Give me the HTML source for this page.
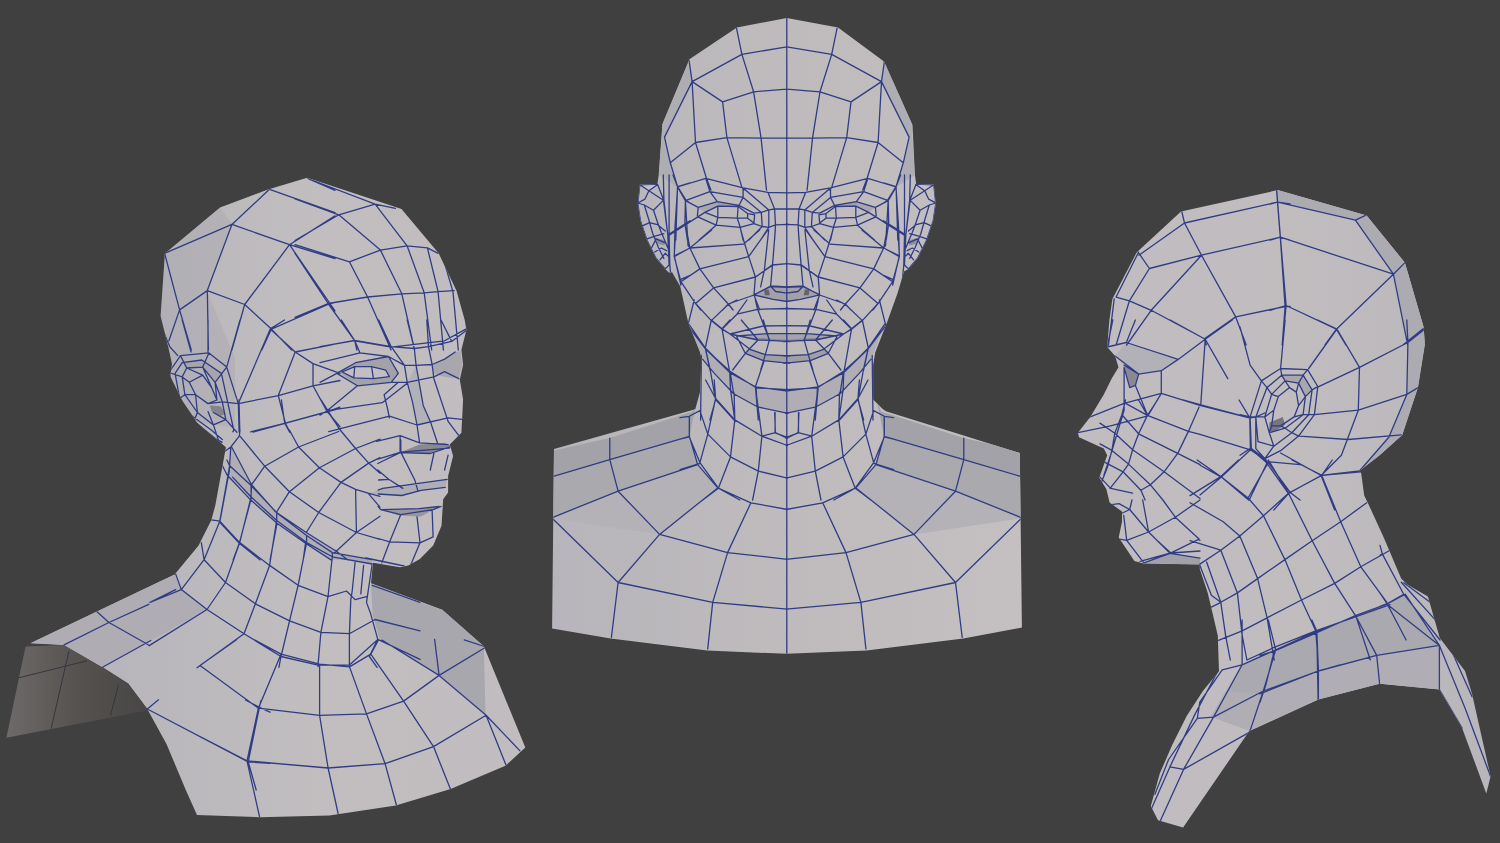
<!DOCTYPE html>
<html><head><meta charset="utf-8"><style>
html,body{margin:0;padding:0;width:1500px;height:843px;overflow:hidden;background:#404040;}
svg{display:block;}
</style></head><body>
<svg width="1500" height="843" viewBox="0 0 1500 843">
<defs>
<linearGradient id="gc" x1="0" y1="0" x2="1" y2="0">
<stop offset="0" stop-color="#b7b5bb"/><stop offset="0.5" stop-color="#bfbbbd"/><stop offset="1" stop-color="#c4bfc1"/>
</linearGradient>
<linearGradient id="gl" x1="0" y1="0" x2="1" y2="0">
<stop offset="0" stop-color="#b3b2b9"/><stop offset="0.6" stop-color="#c2bec0"/><stop offset="1" stop-color="#c0bcbf"/>
</linearGradient>
<linearGradient id="gr" x1="0" y1="0" x2="1" y2="0">
<stop offset="0" stop-color="#c0bcbf"/><stop offset="0.5" stop-color="#c1bdbf"/><stop offset="1" stop-color="#b9b6bb"/>
</linearGradient>
<linearGradient id="gdark" x1="0" y1="0" x2="1" y2="0">
<stop offset="0" stop-color="#6e6a6a"/><stop offset="0.5" stop-color="#55524f"/><stop offset="1" stop-color="#484646"/>
</linearGradient>
<clipPath id="clipC"><polygon points="786.7,18.0 838.0,27.5 884.0,61.5 912.5,125.0 914.9,175.0 916.2,184.1 933.8,184.8 935.8,203.7 933.2,220.7 926.6,240.2 917.5,258.5 908.4,268.9 904.0,271.4 897.7,292.7 887.0,322.6 875.2,352.5 873.1,365.3 873.1,399.5 882.7,409.1 885.9,411.2 1019.8,453.0 1021.9,627.6 963.4,638.5 866.6,650.6 786.8,653.8 707.3,650.6 610.6,638.5 552.1,628.4 554.0,449.0 688.2,411.3 695.3,409.3 700.3,391.1 701.3,358.9 700.3,352.8 688.2,322.6 680.2,286.3 672.1,272.2 669.1,272.8 665.2,268.9 656.1,258.5 647.0,240.2 640.4,220.7 637.8,203.7 639.8,184.8 657.4,184.1 658.7,175.0 662.4,124.3 689.4,59.3 736.9,27.5"/></clipPath>
<clipPath id="clipL"><polygon points="307.2,177.8 401.5,209.1 438.8,253.6 456.6,291.0 464.7,319.9 466.4,329.9 461.4,349.8 463.1,364.7 459.8,379.7 463.1,399.6 461.4,432.8 449.8,444.4 453.1,456.0 448.1,475.9 448.1,492.5 443.2,499.2 441.5,525.7 433.2,545.6 419.9,558.9 408.3,565.6 400.0,567.2 373.0,562.8 371.0,583.2 442.3,609.7 483.8,646.2 525.3,747.5 505.4,765.8 450.6,789.0 395.8,805.6 329.4,815.6 259.7,817.2 197.0,815.0 185.8,790.0 166.6,744.2 147.3,709.0 128.1,683.4 102.5,667.3 64.1,644.9 30.4,643.3 174.6,574.5 198.6,545.6 211.4,520.0 215.4,505.0 225.9,447.3 207.5,431.5 197.0,422.6 182.7,401.2 170.2,376.3 172.0,363.9 168.5,347.9 160.6,315.9 164.9,253.6 220.0,207.4 268.0,189.6"/><polygon points="25.6,646.5 64.1,644.9 102.5,667.3 128.1,683.4 147.3,709.0 147.3,710.6 6.4,737.8"/></clipPath>
<clipPath id="clipR"><polygon points="1277.8,190.1 1366.6,215.5 1404.9,262.7 1423.7,327.3 1424.8,345.0 1418.0,387.6 1402.3,435.0 1379.7,455.2 1359.4,471.0 1361.2,473.3 1364.2,495.6 1368.6,504.5 1383.5,537.1 1401.2,578.6 1407.2,584.6 1427.9,596.4 1439.8,637.9 1465.0,671.0 1472.0,693.8 1490.6,776.4 1486.3,793.5 1462.1,728.0 1439.4,689.5 1379.6,683.8 1318.4,699.5 1249.1,731.3 1183.1,827.5 1158.0,820.3 1150.8,805.9 1159.8,773.6 1172.3,744.8 1186.7,716.1 1202.9,690.9 1219.0,671.2 1217.8,635.5 1207.7,592.7 1199.8,569.0 1199.8,564.5 1143.5,563.4 1134.4,561.1 1118.7,537.5 1122.0,521.7 1122.0,511.6 1109.6,502.5 1106.3,489.0 1099.3,477.8 1107.2,455.2 1103.8,448.5 1079.0,437.2 1077.9,432.7 1090.3,416.9 1103.8,394.4 1111.7,378.6 1118.5,367.3 1115.1,356.1 1107.2,347.0 1109.4,320.0 1112.4,299.0 1136.6,252.6 1181.0,211.5"/></clipPath>
</defs>
<rect width="1500" height="843" fill="#404040"/>
<polygon fill="url(#gc)" points="786.7,18.0 838.0,27.5 884.0,61.5 912.5,125.0 914.9,175.0 916.2,184.1 933.8,184.8 935.8,203.7 933.2,220.7 926.6,240.2 917.5,258.5 908.4,268.9 904.0,271.4 897.7,292.7 887.0,322.6 875.2,352.5 873.1,365.3 873.1,399.5 882.7,409.1 885.9,411.2 1019.8,453.0 1021.9,627.6 963.4,638.5 866.6,650.6 786.8,653.8 707.3,650.6 610.6,638.5 552.1,628.4 554.0,449.0 688.2,411.3 695.3,409.3 700.3,391.1 701.3,358.9 700.3,352.8 688.2,322.6 680.2,286.3 672.1,272.2 669.1,272.8 665.2,268.9 656.1,258.5 647.0,240.2 640.4,220.7 637.8,203.7 639.8,184.8 657.4,184.1 658.7,175.0 662.4,124.3 689.4,59.3 736.9,27.5" />
<polygon fill="url(#gl)" points="307.2,177.8 401.5,209.1 438.8,253.6 456.6,291.0 464.7,319.9 466.4,329.9 461.4,349.8 463.1,364.7 459.8,379.7 463.1,399.6 461.4,432.8 449.8,444.4 453.1,456.0 448.1,475.9 448.1,492.5 443.2,499.2 441.5,525.7 433.2,545.6 419.9,558.9 408.3,565.6 400.0,567.2 373.0,562.8 371.0,583.2 442.3,609.7 483.8,646.2 525.3,747.5 505.4,765.8 450.6,789.0 395.8,805.6 329.4,815.6 259.7,817.2 197.0,815.0 185.8,790.0 166.6,744.2 147.3,709.0 128.1,683.4 102.5,667.3 64.1,644.9 30.4,643.3 174.6,574.5 198.6,545.6 211.4,520.0 215.4,505.0 225.9,447.3 207.5,431.5 197.0,422.6 182.7,401.2 170.2,376.3 172.0,363.9 168.5,347.9 160.6,315.9 164.9,253.6 220.0,207.4 268.0,189.6" />
<polygon fill="url(#gdark)" points="25.6,646.5 64.1,644.9 102.5,667.3 128.1,683.4 147.3,709.0 147.3,710.6 6.4,737.8" />
<polygon fill="url(#gr)" points="1277.8,190.1 1366.6,215.5 1404.9,262.7 1423.7,327.3 1424.8,345.0 1418.0,387.6 1402.3,435.0 1379.7,455.2 1359.4,471.0 1361.2,473.3 1364.2,495.6 1368.6,504.5 1383.5,537.1 1401.2,578.6 1407.2,584.6 1427.9,596.4 1439.8,637.9 1465.0,671.0 1472.0,693.8 1490.6,776.4 1486.3,793.5 1462.1,728.0 1439.4,689.5 1379.6,683.8 1318.4,699.5 1249.1,731.3 1183.1,827.5 1158.0,820.3 1150.8,805.9 1159.8,773.6 1172.3,744.8 1186.7,716.1 1202.9,690.9 1219.0,671.2 1217.8,635.5 1207.7,592.7 1199.8,569.0 1199.8,564.5 1143.5,563.4 1134.4,561.1 1118.7,537.5 1122.0,521.7 1122.0,511.6 1109.6,502.5 1106.3,489.0 1099.3,477.8 1107.2,455.2 1103.8,448.5 1079.0,437.2 1077.9,432.7 1090.3,416.9 1103.8,394.4 1111.7,378.6 1118.5,367.3 1115.1,356.1 1107.2,347.0 1109.4,320.0 1112.4,299.0 1136.6,252.6 1181.0,211.5" />
<g clip-path="url(#clipL)">
<polygon fill="#8a8890" points="209.8,405.4 220.5,406.3 225.8,413.4 220.5,416.0 211.6,411.6" />
<polygon fill="#aeacb3" points="182.2,362.7 201.8,360.0 221.4,373.4 215.1,382.3 202.7,367.1 186.7,368.0" />
<polygon fill="#a4a2a9" points="337.8,371.6 355.6,362.7 388.5,356.5 398.3,373.4 391.2,382.3 357.4,385.8" />
<polygon fill="#c2bfc4" points="342.2,372.0 354.7,366.6 371.6,366.6 385.8,370.2 389.4,376.6 373.4,378.7 353.8,377.8" />
<polygon fill="#a9a7ae" points="432.1,364.5 444.6,359.1 455.2,352.0 460.6,351.1 462.3,364.5 458.8,378.7 444.6,376.9 433.9,373.4" />
<polygon fill="#8a8890" points="400.1,452.6 419.6,444.6 444.6,442.8 451.7,446.3 430.3,453.5" />
<polygon fill="#b3b1b8" points="407.2,382.3 416.1,365.4 423.2,405.4 430.3,421.4 417.0,425.0 412.5,401.9" />
<polygon fill="#b0aeb5" points="368.6,493.4 382.7,488.4 421.0,483.4 447.2,479.3 445.2,487.4 421.0,490.4 401.8,495.5" />
<polygon fill="#98969d" points="380.7,509.6 419.0,508.6 439.1,506.5 421.0,516.6 398.8,515.6" />
<polygon fill="rgba(70,72,100,0.07)" points="164.9,253.6 220.0,207.4 232.0,224.0 207.0,291.0 235.0,358.0 235.0,428.0 193.8,421.4 170.0,376.0 160.6,315.9" />
<polygon fill="#a9a7ae" points="371.0,583.2 405.8,598.1 442.3,609.7 483.8,646.2 485.5,714.3 439.0,674.5 379.3,637.9 372.6,614.7" />
<polygon fill="#afadb3" points="30.4,643.3 92.9,608.1 174.6,574.4 182.6,588.9 206.6,609.7 145.7,643.3 102.5,667.3 64.1,644.9" />
<polygon fill="#a9a7ae" points="226.9,460.0 229.7,465.7 251.1,485.6 276.7,512.7 306.6,535.5 332.3,552.6 372.2,559.7 372.2,564.0 332.3,556.8 306.6,542.6 276.7,520.4 251.1,497.0 232.6,477.1" />
<polygon fill="#b0aeb4" points="231.6,447.0 251.6,484.7 275.5,511.7 306.3,532.5 337.1,551.8 347.9,559.9 331.0,559.9 305.5,543.3 277.0,523.3 250.8,500.1 226.9,474.7" />
<path fill="none" stroke="#303c84" stroke-width="1.3" stroke-linejoin="round" stroke-linecap="round" d="M269.2,189.6 L231.9,224.4 L164.6,253.3 M308.7,179.0 L335.0,190.3 M270.3,189.6 L335.0,212.7 M231.9,224.4 L289.5,244.7 L335.0,258.6 M289.5,244.7 L335.0,215.9 M231.9,224.4 L207.3,290.6 L208.4,350.0 M164.6,253.3 L179.6,309.9 L168.9,340.8 M179.6,309.9 L207.3,290.6 L244.7,304.5 L271.4,329.1 L291.7,350.0 M289.5,244.7 L244.7,304.5 L231.9,350.0 M289.5,244.7 L335.0,310.9 M271.4,329.1 L328.0,304.5 L335.0,302.4 M271.4,329.1 L261.8,350.0 M179.6,309.9 L191.3,350.0 M307.8,178.5 L375.1,204.2 L395.4,208.4 M295.0,198.8 L338.8,214.8 L375.1,204.2 M375.1,204.2 L407.1,245.8 L424.2,292.8 L431.7,350.0 M338.8,214.8 L380.4,250.1 L401.8,293.8 L414.6,350.0 M295.0,240.5 L338.8,214.8 M295.0,244.7 L349.4,261.8 L380.4,250.1 L407.1,245.8 L427.4,247.9 L438.1,253.3 M349.4,261.8 L367.6,297.0 L391.1,350.0 M295.0,253.3 L328.1,303.5 L354.8,340.8 L356.9,350.0 M295.0,317.3 L328.1,303.5 L367.6,297.0 L401.8,293.8 L424.2,292.8 L438.1,291.7 L454.1,290.6 M427.4,247.9 L438.1,291.7 L443.4,350.0 M442.3,255.4 L453.0,291.7 L458.3,350.0 M354.8,340.8 L391.1,347.2 L444.5,340.8 L465.8,329.1 M168.9,372.5 L180.5,355.6 L208.9,352.9 L226.7,367.1 L238.3,403.6 L239.1,432.1 M221.8,442.3 L218.7,440.9 L193.8,421.4 L176.9,400.0 L168.9,372.5 M175.1,373.4 L182.2,362.7 L201.8,360.0 L221.4,373.4 L233.8,430.3 L232.8,431.8 M222.3,439.6 L211.6,430.3 L192.0,416.0 L179.6,398.3 L175.1,373.4 M182.2,376.9 L186.7,368.0 L202.7,367.1 L215.1,382.3 L222.3,401.8 L225.8,419.6 L213.4,424.9 L197.4,412.5 L184.9,394.7 L182.2,376.9 M189.3,382.3 L202.7,375.1 L211.6,387.6 L216.9,400.0 L208.0,403.6 L195.6,394.7 L189.3,382.3 M168.9,372.5 L182.2,376.9 L189.3,382.3 M180.5,355.6 L186.7,368.0 L202.7,375.1 M208.9,352.9 L202.7,367.1 L211.6,387.6 M226.7,367.1 L215.1,382.3 L216.9,400.0 M238.3,403.6 L222.3,401.8 L208.0,403.6 M236.9,432.2 L225.8,419.6 L213.4,412.5 M218.7,440.9 L213.4,424.9 L208.0,411.6 M193.8,421.4 L197.4,412.5 L195.6,394.7 M176.9,400.0 L184.9,394.7 L195.6,394.7 M191.1,352.0 L182.2,320.0 M208.0,352.9 L208.0,320.0 M226.7,367.1 L240.0,320.0 M238.3,403.6 L270.3,328.9 L284.5,320.0 M238.3,403.6 L278.3,395.6 L313.0,385.8 L340.0,380.5 M270.3,328.9 L295.2,352.0 L313.0,363.6 L340.0,373.4 M295.2,352.0 L278.3,395.6 L285.4,423.2 L290.1,432.5 M313.0,363.6 L313.0,385.8 L327.2,411.6 L340.0,426.7 M250.7,431.8 L285.4,423.2 L327.2,411.6 L340.0,407.2 M295.2,352.0 L340.0,343.1 M160.0,323.6 L169.8,346.7 L177.8,355.6 M320.0,346.7 L354.7,340.5 L391.2,346.7 L414.3,348.5 L428.5,346.7 L451.7,341.4 L465.9,330.7 M341.4,320.0 L354.7,340.5 L360.0,352.9 M378.7,320.0 L391.2,346.7 L404.5,365.4 L407.2,382.3 M407.2,320.0 L414.3,348.5 L416.1,365.4 M426.8,320.0 L428.5,346.7 L432.1,364.5 M441.0,320.0 L451.7,341.4 M320.0,362.7 L360.0,352.9 L388.5,356.5 L404.5,365.4 L416.1,365.4 L432.1,364.5 L444.6,359.1 L455.2,352.0 M336.9,373.4 L355.6,362.7 L388.5,356.5 M336.9,373.4 L357.4,385.8 L391.2,382.3 L398.3,373.4 L388.5,356.5 M342.2,372.0 L354.7,366.6 L371.6,366.6 L385.8,370.2 L389.4,376.6 L373.4,378.7 L353.8,377.8 L342.2,372.0 M354.7,366.6 L353.8,377.8 M371.6,366.6 L373.4,378.7 M320.0,382.3 L336.9,373.4 M357.4,385.8 L327.1,410.7 L320.0,415.2 M391.2,382.3 L407.2,382.3 L433.9,376.9 L444.6,371.6 L458.8,378.7 M398.3,382.3 L384.1,394.7 L387.6,409.0 L389.4,417.9 M407.2,382.3 L412.5,401.9 L417.0,425.0 L419.6,442.8 M416.1,365.4 L423.2,405.4 L430.3,421.4 L437.4,442.8 M432.1,364.5 L433.9,378.7 L448.1,421.4 L458.8,435.7 M327.1,410.7 L382.3,402.7 L407.2,383.2 M328.7,431.7 L389.4,416.1 L417.0,425.0 L448.1,417.9 L464.1,419.6 M327.1,410.7 L341.8,432.0 M376.7,441.4 L400.1,435.7 L419.6,442.8 L448.1,444.6 M400.1,435.7 L400.1,452.6 M400.1,452.6 L377.8,463.5 M400.1,452.6 L430.3,453.5 L451.7,446.3 M433.9,453.5 L430.3,470.0 M448.1,455.2 L444.6,470.0 M377.8,470.0 L388.7,479.3 L402.8,488.4 M400.8,440.0 L400.8,452.1 L414.9,480.3 L418.0,491.4 M400.8,452.1 L449.2,448.1 M378.0,459.2 L400.8,452.1 M378.6,480.0 L388.7,479.3 M378.3,494.0 L401.8,495.5 L421.0,490.4 L445.2,487.4 M378.0,490.1 L382.7,488.4 L447.2,479.3 M378.1,506.4 L380.7,509.6 L400.8,514.6 L433.1,509.6 L441.2,506.5 M380.7,509.6 L419.0,508.6 L439.1,506.5 M378.3,538.5 L389.7,541.8 L420.0,542.8 L433.1,536.8 M365.9,558.0 L404.2,566.0 M389.7,541.8 L400.8,514.6 M389.7,541.8 L381.7,563.0 M420.0,542.8 L417.0,516.6 M420.0,542.8 L410.3,566.0 M433.1,536.8 L432.1,509.6 M219.1,440.7 L222.0,442.1 M253.2,432.0 L340.0,408.3 M239.8,432.0 L239.0,400.0 M281.4,400.0 L284.7,423.3 L289.5,432.0 M321.2,400.0 L340.0,429.9 M148.8,604.3 L108.9,622.5 L64.1,644.9 M150.8,640.5 L102.5,667.3 M158.5,699.8 L147.3,709.0 M92.9,608.1 L108.9,622.5 L145.7,643.3 L149.6,645.7 M245.4,700.0 L259.4,707.4 L270.0,712.2 M147.3,709.0 L248.2,761.8 L270.0,763.4 M260.8,700.8 L259.4,707.4 L248.2,761.8 L256.2,790.0 M150.7,584.7 L92.9,608.1 M226.9,460.0 L229.7,465.7 L251.1,485.6 L276.7,512.7 L306.6,535.5 L332.3,552.6 L372.2,559.7 M232.6,477.1 L251.1,497.0 L276.7,520.4 L306.6,542.6 L332.3,556.8 L372.2,564.0 M229.7,465.7 L219.8,521.2 L204.1,559.7 L181.3,589.6 L150.0,602.4 M251.1,485.6 L251.1,497.0 L239.7,542.6 L225.5,582.5 L207.0,609.5 L150.0,645.1 M276.7,512.7 L276.7,520.4 L269.6,565.4 L255.4,603.8 L244.0,633.7 L197.0,667.7 M306.6,535.5 L306.6,542.6 L298.1,585.3 L281.0,656.5 L278.9,667.4 M332.3,552.6 L332.3,556.8 L328.0,596.7 L320.9,632.3 L318.0,665.1 L318.0,666.5 M355.1,562.5 L352.2,591.0 L350.8,599.6 L349.4,633.7 L349.4,665.1 L349.6,666.5 M372.2,564.0 L366.5,602.4 L370.7,613.8 L377.8,639.4 L369.3,656.5 L377.1,667.4 M328.0,596.7 L346.5,591.0 L355.1,599.6 L366.5,596.7 M363.6,565.4 L360.8,593.9 M211.2,519.8 L219.8,521.2 L239.7,542.6 L269.6,565.4 L298.1,585.3 L328.0,596.7 M201.3,542.6 L204.1,559.7 L225.5,582.5 L255.4,603.8 L289.6,620.9 L320.9,632.3 L349.4,633.7 L375.0,619.5 M175.6,573.9 L181.3,589.6 L207.0,609.5 L244.0,633.7 L281.0,656.5 L318.0,665.1 L349.4,665.1 L377.8,639.4 M150.0,602.4 L175.6,589.6 M377.8,639.4 L420.0,659.4 M372.2,585.3 L420.0,602.4 M375.0,619.5 L420.0,630.9 M150.0,573.9 L175.6,573.9 M289.4,430.0 L298.6,447.0 L319.4,467.8 L341.0,482.4 L355.6,489.3 L368.0,493.2 L380.0,496.3 M240.0,436.2 L264.7,466.2 L289.4,491.7 L318.7,512.5 L356.4,532.5 L380.0,539.4 M231.6,447.0 L251.6,484.7 L275.5,511.7 L306.3,532.5 L337.1,551.8 L347.9,559.9 M220.0,460.8 L226.9,474.7 L250.8,500.1 L277.0,523.3 L305.5,543.3 L331.0,559.9 M220.0,522.5 L239.3,543.3 L260.1,559.9 M220.0,454.7 L230.8,447.0 L239.3,436.2 L240.0,430.0 M229.2,471.6 L230.8,447.0 M250.8,500.1 L251.6,484.7 L264.7,466.2 L298.6,447.0 L338.7,431.5 M276.3,512.5 L289.4,491.7 L319.4,467.8 L355.6,448.5 L380.0,439.2 M306.3,532.5 L318.7,512.5 L341.0,482.4 L368.7,463.1 L380.0,457.7 M334.1,553.3 L356.4,532.5 L355.6,489.3 M356.4,532.5 L380.0,516.3 M277.0,523.3 L270.1,559.9 M305.5,543.3 L303.2,559.9 M250.8,500.1 L239.3,543.3 L233.1,559.9 M220.0,520.9 L229.2,471.6 M355.6,489.3 L368.0,493.2 L380.0,507.1 M340.2,430.0 L355.6,448.5 L368.7,463.1 L380.0,473.2 M254.9,640.0 L281.1,654.1 L319.6,664.1 L349.5,666.9 L370.8,654.1 L378.6,639.7 M200.0,665.5 L258.4,708.2 L319.6,715.3 L366.5,713.9 L403.6,701.1 L439.1,675.4 L486.1,647.0 M200.0,736.7 L247.0,760.9 L328.1,768.0 L385.1,763.7 L433.5,746.6 L486.1,715.3 L520.0,750.9 M236.8,639.4 L200.0,665.5 M281.1,654.1 L258.4,708.2 L247.0,760.9 L259.8,817.8 M319.6,664.1 L319.6,715.3 L328.1,768.0 L338.1,813.5 M349.5,666.9 L366.5,713.9 L385.1,763.7 L396.4,805.0 M370.8,654.1 L403.6,701.1 L433.5,746.6 L450.5,789.3 M381.9,640.0 L439.1,675.4 L486.1,715.3 L506.0,765.1 M464.2,639.9 L486.1,647.0 M434.6,639.4 L439.1,675.4"/>
<path fill="none" stroke="#363640" stroke-width="1.0" stroke-linejoin="round" stroke-linecap="round" d="M16.0,678.5 L86.5,660.9 M68.9,651.3 L51.2,728.2 M118.5,684.9 L110.5,715.4"/>
</g>
<g clip-path="url(#clipC)">
<polygon fill="#a9a7ad" points="698.2,207.4 717.3,201.6 717.8,206.1 704.9,212.4" />
<polygon fill="#a9a7ad" points="875.4,207.4 856.3,201.6 855.8,206.1 868.7,212.4" />
<polygon fill="#9e9ca3" points="717.3,201.6 738.9,205.3 738.1,206.5 717.8,206.1" />
<polygon fill="#9e9ca3" points="856.3,201.6 834.7,205.3 835.5,206.5 855.8,206.1" />
<polygon fill="#a6a4aa" points="736.7,336.0 766.7,333.7 790.0,333.7 790.0,341.7 769.3,340.3 758.0,340.0" />
<polygon fill="#a6a4aa" points="836.9,336.0 806.9,333.7 783.6,333.7 783.6,341.7 804.3,340.3 815.6,340.0" />
<polygon fill="#8e8c92" points="746.7,338.0 758.0,340.0 769.3,340.3 790.0,341.7 790.0,340.0 763.3,338.0" />
<polygon fill="#8e8c92" points="826.9,338.0 815.6,340.0 804.3,340.3 783.6,341.7 783.6,340.0 810.3,338.0" />
<polygon fill="#a19fa5" points="750.0,349.3 765.3,354.7 790.0,356.0 790.0,363.3 763.3,360.7 745.3,353.3" />
<polygon fill="#a19fa5" points="823.6,349.3 808.3,354.7 783.6,356.0 783.6,363.3 810.3,360.7 828.3,353.3" />
<polygon fill="#a3a2a8" points="550.0,451.4 609.8,438.1 692.8,411.5 701.1,380.0 689.4,436.4 609.8,459.7 550.0,476.3" />
<polygon fill="#a3a2a8" points="1023.6,451.4 963.8,438.1 880.8,411.5 872.5,380.0 884.2,436.4 963.8,459.7 1023.6,476.3" />
<polygon fill="#aaa9ae" points="550.0,476.3 609.8,459.7 689.4,436.4 697.7,464.7 618.1,491.2 550.0,517.8" />
<polygon fill="#aaa9ae" points="1023.6,476.3 963.8,459.7 884.2,436.4 875.9,464.7 955.5,491.2 1023.6,517.8" />
<polygon fill="#b4b2b7" points="550.0,517.8 618.1,491.2 697.7,464.7 717.7,487.9 659.6,534.4" />
<polygon fill="#b4b2b7" points="1023.6,517.8 955.5,491.2 875.9,464.7 855.9,487.9 914.0,534.4" />
<polygon fill="#b0aeb4" points="688.5,323.7 707.5,351.0 730.0,371.2 756.1,387.8 788.1,389.7 788.1,413.4 757.3,406.8 733.6,393.7 714.6,373.6 702.7,359.3" />
<polygon fill="#b0aeb4" points="885.1,323.7 866.1,351.0 843.6,371.2 817.5,387.8 785.5,389.7 785.5,413.4 816.3,406.8 840.0,393.7 859.0,373.6 870.9,359.3" />
<polygon fill="#8e8c94" points="654.8,237.6 664.6,240.2 664.6,245.4 658.0,244.1" />
<polygon fill="#8e8c94" points="918.8,237.6 909.0,240.2 909.0,245.4 915.6,244.1" />
<polygon fill="#c4c2c8" points="639.8,184.8 657.4,184.8 648.9,190.7" />
<polygon fill="#c4c2c8" points="933.8,184.8 916.2,184.8 924.7,190.7" />
<polygon fill="#a3a1a7" points="753.7,294.8 770.7,286.5 787.1,287.3 787.1,301.5 773.2,299.4" />
<polygon fill="#a3a1a7" points="819.9,294.8 802.9,286.5 786.5,287.3 786.5,301.5 800.4,299.4" />
<polygon fill="#66646a" points="764.1,289.8 768.7,289.4 769.9,295.2 764.9,295.2" />
<polygon fill="#66646a" points="809.5,289.8 804.9,289.4 803.7,295.2 808.7,295.2" />
<polygon fill="#aeadb4" points="689.1,60.6 662.2,122.2 658.7,175.0 677.8,187.4 670.3,162.8 664.5,137.1 692.1,81.6" />
<polygon fill="#aeadb4" points="884.5,60.6 911.4,122.2 914.9,175.0 895.8,187.4 903.3,162.8 909.1,137.1 881.5,81.6" />
<path fill="none" stroke="#303c84" stroke-width="1.3" stroke-linejoin="round" stroke-linecap="round" d="M786.8,18.1 L786.8,190.1 M736.5,28.2 L741.9,54.4 L753.6,91.8 L761.1,138.2 L766.5,190.1 M837.1,28.2 L831.7,54.4 L820.0,91.8 L812.5,138.2 L807.1,190.1 M689.1,60.6 L692.1,81.6 L695.5,142.5 L706.6,178.8 L710.9,190.1 M884.5,60.6 L881.5,81.6 L878.1,142.5 L867.0,178.8 L862.7,190.1 M692.1,81.6 L722.6,101.9 L726.9,137.6 L741.9,187.4 L744.0,190.1 M881.5,81.6 L851.0,101.9 L846.7,137.6 L831.7,187.4 L829.6,190.1 M786.8,46.8 L741.9,54.4 L692.1,81.6 L664.5,137.1 M786.8,46.8 L831.7,54.4 L881.5,81.6 L909.1,137.1 M786.8,89.1 L753.6,91.8 L722.6,101.9 M786.8,89.1 L820.0,91.8 L851.0,101.9 M786.8,138.2 L761.1,138.2 L726.9,137.6 L695.5,142.5 L670.3,162.8 M786.8,138.2 L812.5,138.2 L846.7,137.6 L878.1,142.5 L903.3,162.8 M664.5,137.1 L670.3,162.8 L677.8,187.4 M909.1,137.1 L903.3,162.8 L895.8,187.4 M677.5,187.0 L705.7,178.3 L743.1,187.9 L768.0,192.4 L787.5,192.8 M896.1,187.0 L867.9,178.3 L830.5,187.9 L805.6,192.4 L786.1,192.8 M705.7,178.3 L709.9,191.6 L717.3,201.6 M867.9,178.3 L863.7,191.6 L856.3,201.6 M743.1,187.9 L743.1,197.4 L738.9,205.7 M830.5,187.9 L830.5,197.4 L834.7,205.7 M768.0,192.4 L774.6,209.0 L775.5,224.8 L774.6,240.0 M805.6,192.4 L799.0,209.0 L798.1,224.8 L799.0,240.0 M677.5,187.0 L685.4,200.7 L709.9,191.6 L743.1,197.4 L761.3,212.4 M896.1,187.0 L888.2,200.7 L863.7,191.6 L830.5,197.4 L812.3,212.4 M743.1,187.9 L768.8,209.9 L774.6,209.0 L787.5,209.0 M830.5,187.9 L804.8,209.9 L799.0,209.0 L786.1,209.0 M685.4,200.7 L698.2,207.4 L717.3,201.6 L738.9,205.3 L753.9,213.2 L761.3,212.4 L768.8,209.9 M888.2,200.7 L875.4,207.4 L856.3,201.6 L834.7,205.3 L819.7,213.2 L812.3,212.4 L804.8,209.9 M698.2,207.4 L697.4,215.7 M875.4,207.4 L876.2,215.7 M704.9,212.4 L717.8,206.1 L738.1,206.5 L747.6,213.6 L754.7,214.8 M868.7,212.4 L855.8,206.1 L835.5,206.5 L826.0,213.6 L818.9,214.8 M704.9,212.4 L717.8,217.3 L737.3,218.2 L747.6,218.2 L753.9,223.1 M868.7,212.4 L855.8,217.3 L836.3,218.2 L826.0,218.2 L819.7,223.1 M697.8,216.9 L704.9,212.4 M875.8,216.9 L868.7,212.4 M697.8,216.9 L716.1,225.2 L740.2,227.3 L753.9,223.6 L762.2,226.5 L768.8,227.3 L775.5,224.8 L787.5,224.4 M875.8,216.9 L857.5,225.2 L833.4,227.3 L819.7,223.6 L811.4,226.5 L804.8,227.3 L798.1,224.8 L786.1,224.4 M717.8,206.1 L717.8,217.3 L716.1,225.2 M855.8,206.1 L855.8,217.3 L857.5,225.2 M738.1,206.5 L737.3,218.2 L740.2,227.3 M835.5,206.5 L836.3,218.2 L833.4,227.3 M747.6,213.6 L747.6,218.2 M826.0,213.6 L826.0,218.2 M754.7,214.8 L753.9,223.1 M818.9,214.8 L819.7,223.1 M761.3,212.4 L762.2,226.5 M812.3,212.4 L811.4,226.5 M768.8,209.9 L768.8,227.3 M804.8,209.9 L804.8,227.3 M670.0,234.8 L697.8,216.9 M903.6,234.8 L875.8,216.9 M685.4,200.7 L684.9,223.1 L687.4,240.0 M888.2,200.7 L888.7,223.1 L886.2,240.0 M677.5,187.0 L675.8,240.0 M896.1,187.0 L897.8,240.0 M716.1,225.2 L699.1,240.0 M857.5,225.2 L874.5,240.0 M740.2,227.3 L743.1,240.0 M833.4,227.3 L830.5,240.0 M762.2,226.5 L748.9,240.0 M811.4,226.5 L824.7,240.0 M768.8,227.3 L760.5,240.0 M804.8,227.3 L813.1,240.0 M686.6,230.0 L689.9,248.0 L699.9,268.9 L713.6,287.9 L728.3,304.0 L733.1,310.0 M887.0,230.0 L883.7,248.0 L873.7,268.9 L860.0,287.9 L845.3,304.0 L840.5,310.0 M711.7,230.0 L689.9,248.0 L674.2,256.6 M861.9,230.0 L883.7,248.0 L899.4,256.6 M689.9,248.0 L743.5,244.2 M883.7,248.0 L830.1,244.2 M740.7,230.0 L744.5,243.3 L748.7,256.6 L755.4,277.0 L754.0,295.0 L759.7,310.0 M832.9,230.0 L829.1,243.3 L824.9,256.6 L818.2,277.0 L819.6,295.0 L813.9,310.0 M759.7,230.0 L744.5,243.3 M813.9,230.0 L829.1,243.3 M767.7,230.0 L748.7,256.6 M805.9,230.0 L824.9,256.6 M768.7,230.0 L764.4,269.9 L760.6,286.9 M804.9,230.0 L809.2,269.9 L813.0,286.9 M775.3,230.0 L772.5,265.1 L770.6,286.0 M798.3,230.0 L801.1,265.1 L803.0,286.0 M675.7,230.0 L674.2,256.6 L680.9,281.7 L695.6,303.6 L700.8,310.0 M897.9,230.0 L899.4,256.6 L892.7,281.7 L878.0,303.6 L872.8,310.0 M699.9,268.9 L748.7,256.6 M873.7,268.9 L824.9,256.6 M680.9,281.7 L699.9,268.9 M892.7,281.7 L873.7,268.9 M713.6,287.9 L755.4,277.0 M860.0,287.9 L818.2,277.0 M695.6,303.6 L713.6,287.9 M878.0,303.6 L860.0,287.9 M728.3,304.0 L754.0,295.0 M845.3,304.0 L819.6,295.0 M754.0,295.0 L770.6,286.0 L787.7,286.9 M819.6,295.0 L803.0,286.0 L785.9,286.9 M755.4,277.0 L772.5,265.1 L787.7,263.7 M818.2,277.0 L801.1,265.1 L785.9,263.7 M722.6,310.0 L728.3,304.0 M851.0,310.0 L845.3,304.0 M711.3,320.0 L722.0,328.7 L730.0,334.0 L758.0,340.0 L769.3,340.3 L790.0,341.7 M862.3,320.0 L851.6,328.7 L843.6,334.0 L815.6,340.0 L804.3,340.3 L783.6,341.7 M730.0,334.0 L763.3,326.0 L790.0,325.7 M843.6,334.0 L810.3,326.0 L783.6,325.7 M736.7,336.0 L766.7,333.7 L790.0,333.7 M836.9,336.0 L806.9,333.7 L783.6,333.7 M741.3,320.0 L758.0,340.0 L745.3,353.3 L732.7,370.0 M832.3,320.0 L815.6,340.0 L828.3,353.3 L840.9,370.0 M763.3,320.0 L769.3,340.3 L765.3,354.7 L760.7,370.0 M810.3,320.0 L804.3,340.3 L808.3,354.7 L812.9,370.0 M730.0,320.0 L722.0,328.7 L729.3,370.0 M843.6,320.0 L851.6,328.7 L844.3,370.0 M711.3,320.0 L705.3,348.0 L710.0,370.0 M862.3,320.0 L868.3,348.0 L863.6,370.0 M690.0,328.7 L705.3,348.0 L727.3,370.0 M883.6,328.7 L868.3,348.0 L846.3,370.0 M730.0,334.0 L750.0,349.3 L765.3,354.7 L790.0,356.0 M843.6,334.0 L823.6,349.3 L808.3,354.7 L783.6,356.0 M736.7,336.7 L745.3,353.3 L763.3,360.7 L790.0,363.3 M836.9,336.7 L828.3,353.3 L810.3,360.7 L783.6,363.3 M687.8,325.6 L705.6,349.1 L729.8,372.6 L755.4,386.8 L787.5,391.1 M885.8,325.6 L868.0,349.1 L843.8,372.6 L818.2,386.8 L786.1,391.1 M758.3,420.0 L755.4,386.8 M815.3,420.0 L818.2,386.8 M764.0,361.2 L755.4,386.8 M809.6,361.2 L818.2,386.8 M729.8,372.6 L730.5,389.7 L734.8,420.0 M843.8,372.6 L843.1,389.7 L838.8,420.0 M705.6,349.1 L709.9,368.3 L715.6,399.6 L709.9,420.0 M868.0,349.1 L863.7,368.3 L858.0,399.6 L863.7,420.0 M701.4,355.5 L700.6,420.0 M872.2,355.5 L873.0,420.0 M715.6,399.6 L734.1,420.0 M858.0,399.6 L839.5,420.0 M786.8,18.0 L786.8,653.8 M736.9,314.2 L757.6,309.3 L787.5,308.5 M836.7,314.2 L816.0,309.3 L786.1,308.5 M711.3,320.6 L728.4,304.3 L736.9,300.0 M862.3,320.6 L845.2,304.3 L836.7,300.0 M694.9,302.8 L711.3,320.6 L722.0,329.2 L730.5,334.2 M878.7,302.8 L862.3,320.6 L851.6,329.2 L843.1,334.2 M722.0,329.2 L736.9,314.2 L746.9,300.0 M851.6,329.2 L836.7,314.2 L826.7,300.0 M755.4,300.0 L757.6,309.3 L769.7,340.6 M818.2,300.0 L816.0,309.3 L803.9,340.6 M694.2,300.0 L687.8,325.6 M879.4,300.0 L885.8,325.6 M680.0,417.7 L689.3,416.3 L699.9,410.6 L707.8,434.1 L730.5,456.9 L758.3,471.1 L787.5,478.2 M893.6,417.7 L884.3,416.3 L873.7,410.6 L865.8,434.1 L843.1,456.9 L815.3,471.1 L786.1,478.2 M689.3,416.3 L689.3,436.9 L699.9,462.6 L718.4,488.2 L702.8,500.0 M884.3,416.3 L884.3,436.9 L873.7,462.6 L855.2,488.2 L870.8,500.0 M680.0,439.1 L689.3,436.9 M893.6,439.1 L884.3,436.9 M680.0,469.7 L699.9,463.3 M893.6,469.7 L873.7,463.3 M705.6,380.0 L715.6,398.5 L734.8,419.9 L761.9,436.2 L775.4,432.7 L787.5,438.4 M868.0,380.0 L858.0,398.5 L838.8,419.9 L811.7,436.2 L798.2,432.7 L786.1,438.4 M715.6,398.5 L707.8,434.1 L699.9,462.6 M858.0,398.5 L865.8,434.1 L873.7,462.6 M734.8,419.9 L730.5,456.9 L718.4,488.2 M838.8,419.9 L843.1,456.9 L855.2,488.2 M761.9,436.2 L758.3,471.1 L752.6,500.0 M811.7,436.2 L815.3,471.1 L821.0,500.0 M714.2,380.0 L715.6,398.5 M859.4,380.0 L858.0,398.5 M734.1,392.8 L734.8,419.9 M839.5,392.8 L838.8,419.9 M755.4,387.1 L761.9,436.2 M818.2,387.1 L811.7,436.2 M718.4,488.2 L739.8,500.0 M855.2,488.2 L833.8,500.0 M774.7,412.7 L775.4,432.7 M798.9,412.7 L798.2,432.7 M761.9,436.2 L787.5,445.5 M811.7,436.2 L786.1,445.5 M553.3,476.3 L609.8,459.7 L689.4,436.4 M1020.3,476.3 L963.8,459.7 L884.2,436.4 M551.7,517.8 L618.1,491.2 L697.7,464.7 M1021.9,517.8 L955.5,491.2 L875.9,464.7 M609.8,438.1 L609.8,459.7 L618.1,491.2 L659.6,534.4 L618.1,582.5 L611.4,637.3 M963.8,438.1 L963.8,459.7 L955.5,491.2 L914.0,534.4 L955.5,582.5 L962.2,637.3 M551.7,517.8 L618.1,582.5 L712.7,602.4 L787.4,609.1 M1021.9,517.8 L955.5,582.5 L860.9,602.4 L786.2,609.1 M689.4,416.5 L689.4,436.4 L697.7,464.7 L717.7,487.9 L750.9,502.8 L787.4,509.5 M884.2,416.5 L884.2,436.4 L875.9,464.7 L855.9,487.9 L822.7,502.8 L786.2,509.5 M659.6,534.4 L727.6,552.6 L787.4,559.3 M914.0,534.4 L846.0,552.6 L786.2,559.3 M717.7,487.9 L659.6,534.4 M855.9,487.9 L914.0,534.4 M750.9,502.8 L727.6,552.6 L712.7,602.4 L707.7,648.9 M822.7,502.8 L846.0,552.6 L860.9,602.4 L865.9,648.9 M688.5,323.7 L707.5,351.0 L730.0,371.2 L756.1,387.8 L788.1,389.7 M885.1,323.7 L866.1,351.0 L843.6,371.2 L817.5,387.8 L785.5,389.7 M702.7,359.3 L714.6,373.6 L733.6,393.7 L757.3,406.8 L788.1,413.4 M870.9,359.3 L859.0,373.6 L840.0,393.7 L816.3,406.8 L785.5,413.4 M730.0,371.2 L733.6,393.7 M843.6,371.2 L840.0,393.7 M756.1,387.8 L757.3,406.8 M817.5,387.8 L816.3,406.8 M775.1,412.7 L775.1,432.9 L788.1,437.6 M798.5,412.7 L798.5,432.9 L785.5,437.6 M639.8,184.8 L657.4,184.1 L663.3,199.1 L667.8,235.0 L669.1,265.0 L665.2,268.9 L656.1,258.5 L647.0,240.2 L640.4,220.7 L637.8,203.7 L639.8,184.8 M933.8,184.8 L916.2,184.1 L910.3,199.1 L905.8,235.0 L904.5,265.0 L908.4,268.9 L917.5,258.5 L926.6,240.2 L933.2,220.7 L935.8,203.7 L933.8,184.8 M639.8,184.8 L648.9,190.7 L657.4,184.8 M933.8,184.8 L924.7,190.7 L916.2,184.8 M648.9,190.7 L645.0,199.1 L637.8,203.0 M924.7,190.7 L928.6,199.1 L935.8,203.0 M648.9,190.7 L662.6,199.8 M924.7,190.7 L911.0,199.8 M637.8,203.0 L644.3,205.0 L653.5,210.2 L662.6,201.1 M935.8,203.0 L929.3,205.0 L920.1,210.2 L911.0,201.1 M644.3,205.0 L648.3,218.0 L652.8,233.7 L658.7,248.0 L663.9,258.5 M929.3,205.0 L925.3,218.0 L920.8,233.7 L914.9,248.0 L909.7,258.5 M653.5,210.2 L657.4,222.0 L661.3,232.4 L665.2,241.5 L667.8,248.0 M920.1,210.2 L916.2,222.0 L912.3,232.4 L908.4,241.5 L905.8,248.0 M642.4,225.9 L649.6,222.6 L657.4,224.6 L665.2,231.1 M931.2,225.9 L924.0,222.6 L916.2,224.6 L908.4,231.1 M647.0,238.9 L654.1,236.3 L663.9,233.7 M926.6,238.9 L919.5,236.3 L909.7,233.7 M651.5,248.0 L656.1,238.9 L665.2,242.8 M922.1,248.0 L917.5,238.9 L908.4,242.8 M654.8,252.0 L661.3,248.0 L666.5,250.7 M918.8,252.0 L912.3,248.0 L907.1,250.7 M660.0,259.8 L665.2,253.3 L667.8,255.9 M913.6,259.8 L908.4,253.3 L905.8,255.9 M663.3,175.0 L663.9,199.8 L667.8,235.0 M910.3,175.0 L909.7,199.8 L905.8,235.0 M669.1,175.0 L669.1,235.0 L669.8,265.0 L671.7,285.0 M904.5,175.0 L904.5,235.0 L903.8,265.0 L901.9,285.0 M673.0,175.0 L677.6,186.7 L686.1,200.4 L690.0,203.0 M900.6,175.0 L896.0,186.7 L887.5,200.4 L883.6,203.0 M677.6,186.7 L690.0,182.8 M896.0,186.7 L883.6,182.8 M677.6,186.7 L675.0,227.2 L674.3,255.9 L680.9,285.0 M896.0,186.7 L898.6,227.2 L899.3,255.9 L892.7,285.0 M685.4,200.4 L688.0,245.4 L690.0,248.0 M888.2,200.4 L885.6,245.4 L883.6,248.0 M667.8,235.0 L679.6,227.2 L690.0,220.7 M905.8,235.0 L894.0,227.2 L883.6,220.7 M674.3,255.9 L690.0,248.0 M899.3,255.9 L883.6,248.0 M680.9,279.3 L690.0,275.4 M892.7,279.3 L883.6,275.4 M753.7,294.8 L770.7,286.5 L787.1,287.3 M819.9,294.8 L802.9,286.5 L786.5,287.3 M753.7,294.8 L773.2,299.4 L787.1,301.5 M819.9,294.8 L800.4,299.4 L786.5,301.5 M770.7,286.5 L775.7,291.5 L787.1,293.2 M802.9,286.5 L797.9,291.5 L786.5,293.2 M755.0,277.4 L772.4,264.9 L787.1,263.7 M818.6,277.4 L801.2,264.9 L786.5,263.7"/>
</g>
<g clip-path="url(#clipR)">
<polygon fill="#acabb2" points="1276.6,189.7 1367.7,214.4 1405.7,260.9 1423.7,327.3 1430.0,345.0 1407.6,345.0 1393.4,274.2 1355.4,220.1 1277.6,202.1" />
<polygon fill="#77757e" points="1269.3,422.6 1282.8,416.9 1285.1,424.8 1276.1,430.4 1269.3,431.6" />
<polygon fill="#a9a7ae" points="1281.7,375.2 1303.1,375.2 1312.1,389.9 1305.4,396.6 1298.6,383.1 1285.1,380.9" />
<polygon fill="#b3b1b8" points="1115.1,356.1 1126.3,342.5 1178.2,359.4 1161.3,370.7 1138.7,374.1 1124.1,365.1" />
<polygon fill="#8a8890" points="1124.1,365.1 1138.7,374.1 1135.4,385.4 1129.7,387.6" />
<polygon fill="#a3a1a8" points="1143.9,562.9 1170.0,553.4 1200.0,558.1 1200.0,564.7" />
<polygon fill="#aba9b0" points="1242.1,664.5 1260.0,655.4 1274.2,651.1 1316.9,632.6 1355.4,615.5 1386.7,604.1 1405.2,594.2 1439.4,645.4 1439.4,689.5 1379.6,683.8 1318.4,699.5 1260.0,725.1 1249.2,730.8 1211.0,716.6" />
<polygon fill="#b0aeb4" points="1225.8,691.0 1260.0,693.8 1318.4,671.0 1376.7,655.4 1439.4,645.4 1439.4,689.5 1379.6,683.8 1318.4,699.5 1260.0,725.1 1249.2,730.8 1211.0,716.6" />
<polygon fill="#acabb2" points="1404.9,262.7 1423.7,327.3 1424.8,345.0 1418.0,387.6 1402.3,435.0 1379.7,455.2 1359.4,471.0 1388.7,437.2 1406.8,394.4 1407.9,342.5 1406.8,320.0 1392.0,262.0" />
<path fill="none" stroke="#303c84" stroke-width="1.3" stroke-linejoin="round" stroke-linecap="round" d="M1276.5,189.7 L1277.5,202.1 L1280.3,237.2 L1285.1,306.5 L1282.2,345.0 M1181.6,210.6 L1184.5,223.0 L1201.5,255.2 L1235.7,316.9 L1246.2,345.0 M1137.0,250.5 L1149.4,268.5 L1201.5,255.2 L1280.3,237.2 L1290.0,240.0 M1138.9,255.2 L1184.5,223.0 L1277.5,202.1 L1290.0,204.0 M1116.1,297.0 L1129.4,300.8 L1151.2,310.3 L1204.4,338.7 L1206.3,345.0 M1149.4,268.5 L1129.4,300.8 L1116.1,345.0 M1201.5,255.2 L1151.2,310.3 L1126.6,345.0 M1235.7,316.9 L1285.1,306.5 L1290.0,306.5 M1204.4,338.7 L1235.7,316.9 M1138.0,253.3 L1116.1,297.0 M1114.2,298.9 L1108.5,345.0 M1276.6,189.7 L1277.6,202.1 L1280.4,237.2 L1286.1,305.5 L1282.3,345.0 M1270.0,204.0 L1277.6,202.1 L1355.4,220.1 L1367.7,214.4 M1270.0,240.0 L1280.4,237.2 L1393.4,274.2 L1405.7,261.9 M1355.4,220.1 L1393.4,274.2 L1407.6,344.4 M1393.4,274.2 L1336.4,329.2 L1325.0,345.0 M1270.0,310.3 L1286.1,305.5 L1336.4,329.2 L1345.9,345.0 M1423.7,328.3 L1402.9,345.0 M1285.1,320.0 L1280.6,368.5 M1317.8,320.0 L1336.9,329.0 L1359.5,367.3 L1358.3,410.2 L1341.4,455.2 L1321.1,475.5 M1336.9,329.0 L1308.7,368.5 M1240.0,326.8 L1250.1,365.1 L1261.4,380.9 M1406.8,320.0 L1407.9,342.5 L1406.8,394.4 L1388.8,437.2 L1359.5,471.0 M1424.8,329.0 L1407.9,342.5 L1359.5,367.3 L1316.6,387.6 M1418.1,387.6 L1406.8,394.4 L1358.3,410.2 L1314.4,414.7 M1401.2,434.9 L1348.2,439.5 L1299.7,436.1 M1359.5,471.0 L1321.1,475.5 L1280.6,453.0 M1321.1,475.5 L1334.7,510.0 M1321.1,475.5 L1288.5,493.5 L1273.8,510.0 M1265.9,462.0 L1288.5,493.5 M1250.1,448.5 L1265.9,462.0 M1250.1,448.5 L1240.0,455.2 M1250.1,416.9 L1240.0,414.7 M1261.4,380.9 L1280.6,368.5 L1307.6,369.6 L1317.8,386.5 L1314.4,414.7 L1298.6,436.1 L1280.6,450.7 L1264.8,458.6 L1251.3,448.5 L1250.1,416.9 L1261.4,380.9 M1267.0,387.6 L1281.7,375.2 L1303.1,375.2 L1312.1,389.9 L1308.7,414.7 L1291.8,432.7 L1273.8,446.2 L1258.0,441.7 L1255.8,416.9 L1267.0,387.6 M1271.6,394.4 L1285.1,380.9 L1298.6,383.1 L1305.4,396.6 L1303.1,414.7 L1285.1,428.2 L1269.3,432.7 L1264.8,416.9 L1271.6,394.4 M1278.3,396.6 L1289.6,387.6 L1296.3,392.1 L1298.6,405.6 L1294.1,416.9 L1280.6,425.9 L1271.6,425.9 L1273.8,410.2 L1278.3,396.6 M1280.6,368.5 L1281.7,375.2 L1285.1,380.9 L1289.6,387.6 M1307.6,369.6 L1303.1,375.2 L1298.6,383.1 L1296.3,392.1 M1317.8,386.5 L1312.1,389.9 L1305.4,396.6 L1298.6,405.6 M1314.4,414.7 L1308.7,414.7 L1303.1,414.7 L1294.1,416.9 M1298.6,436.1 L1291.8,432.7 L1285.1,428.2 L1280.6,425.9 M1264.8,458.6 L1273.8,446.2 L1269.3,432.7 L1271.6,425.9 M1250.1,416.9 L1255.8,416.9 L1264.8,416.9 L1273.8,410.2 M1261.4,380.9 L1267.0,387.6 L1271.6,394.4 L1278.3,396.6 M1107.2,347.0 L1126.3,342.5 L1178.2,359.4 L1205.2,339.2 L1232.3,320.0 M1112.8,320.0 L1107.2,347.0 M1135.4,320.0 L1126.3,342.5 M1170.3,320.0 L1205.2,339.2 L1227.8,378.6 M1205.2,339.2 L1200.7,405.6 M1178.2,359.4 L1161.3,370.7 L1161.3,393.3 L1147.8,415.8 M1115.1,356.1 L1138.7,374.1 L1161.3,370.7 M1124.1,365.1 L1138.7,374.1 L1135.4,385.4 L1129.7,387.6 L1124.1,367.3 M1161.3,393.3 L1200.7,405.6 L1250.3,418.0 M1090.3,416.9 L1124.1,403.4 L1161.3,393.3 M1077.9,432.7 L1110.6,425.9 L1147.8,415.8 M1124.1,367.3 L1124.1,410.2 L1117.3,432.7 L1110.6,455.2 L1103.8,475.5 M1135.4,385.4 L1147.8,415.8 M1125.5,400.0 L1121.9,414.8 L1114.8,433.2 L1111.9,450.4 L1107.7,466.4 L1101.2,483.0 M1157.5,400.0 L1147.4,415.4 L1138.6,433.8 L1132.6,449.8 L1128.5,464.1 L1123.1,471.8 L1110.1,488.4 M1199.1,407.1 L1188.4,431.4 L1177.7,453.4 L1164.1,471.8 L1150.4,484.8 L1140.9,490.2 M1126.1,403.6 L1147.4,415.4 L1188.4,431.4 L1200.0,434.4 M1121.9,414.8 L1138.6,433.8 L1177.7,453.4 L1200.0,464.7 M1100.0,423.1 L1114.8,433.2 L1132.6,449.8 L1164.1,471.8 L1200.0,498.5 M1100.0,443.9 L1111.9,450.4 L1128.5,464.1 L1150.4,484.8 L1162.9,500.0 M1103.6,461.7 L1123.1,471.8 L1140.9,490.2 L1145.1,500.0 M1100.0,477.1 L1110.7,488.4 L1132.6,493.1 M1138.6,400.0 L1147.4,415.4 M1183.0,400.0 L1200.0,404.7 M1200.0,404.7 L1249.8,417.8 L1255.8,417.2 L1264.7,413.0 M1239.1,400.0 L1249.8,417.8 L1250.4,449.8 M1200.0,434.4 L1250.4,449.8 L1267.6,461.7 L1300.0,464.7 M1250.4,449.8 L1221.4,477.1 L1200.0,494.9 M1200.0,465.2 L1221.4,477.1 L1248.6,500.0 M1267.6,461.7 L1249.2,500.0 M1267.6,461.7 L1290.2,492.5 L1300.0,500.0 M1255.8,417.2 L1255.8,448.6 L1267.6,461.7 M1111.9,504.7 L1119.0,503.6 L1129.7,509.5 L1132.0,500.0 M1129.7,509.5 L1148.6,532.0 L1170.0,553.4 L1200.0,558.1 M1122.5,513.0 L1129.7,509.5 M1142.7,500.0 L1148.6,532.0 M1162.9,500.0 L1175.3,517.2 L1199.1,539.1 M1200.0,500.0 L1175.3,517.2 L1148.6,532.0 L1126.7,540.3 L1119.6,539.1 M1126.7,540.3 L1143.9,562.9 M1123.7,515.4 L1126.7,540.3 M1143.9,562.9 L1170.0,553.4 L1199.1,539.1 M1156.6,540.0 L1170.8,553.0 L1200.0,551.0 M1140.0,561.4 L1170.8,553.0 M1199.3,540.0 L1200.0,540.3 M1380.0,593.2 L1387.1,603.7 L1406.1,640.0 M1380.0,545.3 L1382.3,553.9 L1403.7,594.2 M1380.0,555.4 L1382.3,553.9 M1380.0,606.4 L1387.1,603.7 L1403.7,594.2 M1401.3,582.3 L1440.0,625.1 M1403.7,594.2 L1440.0,640.0 M1242.1,620.0 L1242.1,664.8 L1213.5,717.1 L1183.6,769.4 L1159.9,821.7 M1268.3,620.0 L1275.7,649.9 L1263.3,691.0 L1249.6,732.1 M1311.9,620.0 L1316.8,631.2 L1318.1,699.7 M1222.2,669.8 L1242.1,664.8 L1275.7,649.9 L1316.8,631.2 L1340.0,622.5 M1197.3,718.4 L1213.5,717.1 L1263.3,691.0 L1318.1,671.1 L1340.0,664.8 M1169.9,766.9 L1183.6,769.4 L1249.6,732.1 M1217.2,672.3 L1194.8,714.6 L1169.9,766.9 L1151.2,809.3 M1222.2,669.8 L1199.8,702.2 L1197.3,718.4 L1168.6,759.5 L1154.9,794.3 M1260.0,655.4 L1274.2,651.1 L1316.9,632.6 L1355.4,615.5 L1386.7,604.1 L1405.2,594.2 M1260.0,693.8 L1318.4,671.0 L1376.7,655.4 L1439.4,645.4 M1274.2,651.1 L1265.7,685.3 L1260.0,702.3 M1316.9,632.6 L1318.4,671.0 L1318.4,699.5 M1355.4,615.5 L1376.7,655.4 L1379.6,683.8 M1386.7,604.1 L1439.4,645.4 L1439.4,689.5 M1405.2,594.2 L1439.4,645.4 M1439.4,645.4 L1465.0,708.0 L1490.6,776.4 M1439.4,689.5 L1462.1,728.0 M1403.8,582.8 L1430.8,602.7 L1459.3,668.2 L1472.1,696.7 M1190.0,495.6 L1220.8,476.6 L1238.6,460.0 M1190.0,502.7 L1223.2,521.7 L1239.8,535.9 M1197.1,460.0 L1220.8,476.6 L1248.1,498.0 L1263.5,515.8 M1248.1,498.0 L1268.3,462.4 M1268.3,460.0 L1288.5,493.2 M1292.0,460.0 L1321.7,475.4 L1332.3,460.0 M1190.0,540.7 L1220.8,550.2 M1199.5,564.4 L1211.4,595.2 L1220.8,602.3 L1225.6,635.6 L1230.3,660.0 M1206.6,562.0 L1220.8,602.3 M1220.8,550.2 L1237.4,592.9 L1242.2,635.6 L1246.9,660.0 M1239.8,535.9 L1257.6,578.6 L1267.1,617.8 L1274.2,660.0 M1263.5,515.8 L1284.9,559.6 L1301.5,600.0 L1315.7,630.8 L1318.1,660.0 M1288.5,493.2 L1312.2,540.7 L1334.7,583.4 L1356.1,616.6 L1370.3,660.0 M1321.7,475.4 L1340.7,521.7 L1360.8,566.8 L1386.9,602.3 M1199.5,564.4 L1220.8,550.2 L1239.8,535.9 L1263.5,515.8 L1288.5,493.2 L1321.7,475.4 L1360.8,471.9 M1211.4,607.1 L1220.8,602.3 L1237.4,592.9 L1257.6,578.6 L1284.9,559.6 L1312.2,540.7 L1340.7,521.7 L1366.7,502.7 M1218.5,640.3 L1242.2,630.8 L1267.1,617.8 L1301.5,600.0 L1334.7,583.4 L1360.8,566.8 L1390.0,550.2 M1246.9,660.0 L1274.2,647.4 L1315.7,630.8 L1356.1,616.6 L1390.0,604.7"/>
</g>
</svg>
</body></html>
